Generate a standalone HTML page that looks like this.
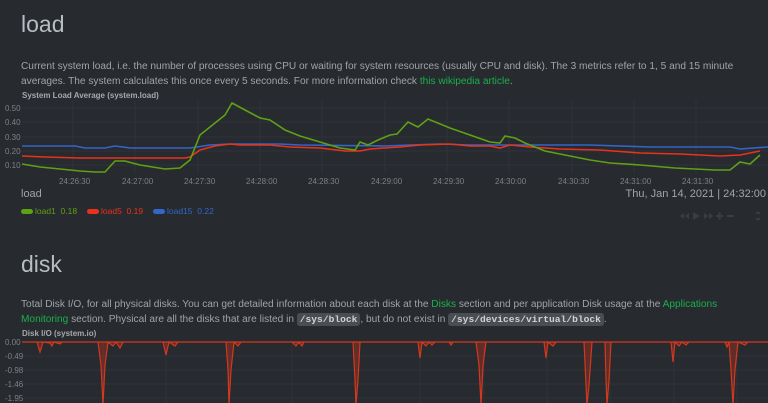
<!DOCTYPE html>
<html><head><meta charset="utf-8"><style>
html,body{margin:0;padding:0;}
body{width:768px;height:403px;overflow:hidden;background:#272a2f;font-family:"Liberation Sans",sans-serif;color:#a7abae;position:relative;}
.a{position:absolute;white-space:nowrap;}
h1{position:absolute;margin:0;font-weight:normal;font-size:23px;color:#b8bdc1;}
.p{font-size:10.15px;line-height:15px;color:#a0a4a8;}
.g{color:#1bb04a;}
code{font-family:"Liberation Mono",monospace;background:#4a4d52;color:#d0d3d6;border-radius:3px;padding:1px 3px;font-size:9.6px;font-weight:bold;}
.t{font-size:8px;font-weight:bold;color:#a5a9ad;}
.yl{font-size:8px;color:#7d8185;}
.xl{font-size:8px;color:#7d8185;}
.lg{font-size:8.5px;}
.sw{display:inline-block;width:12px;height:5px;border-radius:3px;vertical-align:middle;margin-right:2px;}
</style></head><body>
<h1 style="left:21px;top:11px">load</h1>
<div class="a p" style="left:21px;top:59px">Current system load, i.e. the number of processes using CPU or waiting for system resources (usually CPU and disk). The 3 metrics refer to 1, 5 and 15 minute<br>averages. The system calculates this once every 5 seconds. For more information check <span class="g">this wikipedia article</span>.</div>
<div class="a t" style="left:22px;top:91px">System Load Average (system.load)</div>
<div class="a yl" style="left:5px;top:104px">0.50</div>
<div class="a yl" style="left:5px;top:118px">0.40</div>
<div class="a yl" style="left:5px;top:133px">0.30</div>
<div class="a yl" style="left:5px;top:147px">0.20</div>
<div class="a yl" style="left:5px;top:161px">0.10</div>
<svg class="a" style="left:0;top:0" width="768" height="403">
<g stroke="#2f3338" stroke-width="1">
<line x1="73" y1="100" x2="73" y2="174"/><line x1="135" y1="100" x2="135" y2="174"/><line x1="198" y1="100" x2="198" y2="174"/><line x1="260" y1="100" x2="260" y2="174"/><line x1="322" y1="100" x2="322" y2="174"/><line x1="385" y1="100" x2="385" y2="174"/><line x1="447" y1="100" x2="447" y2="174"/><line x1="509" y1="100" x2="509" y2="174"/><line x1="572" y1="100" x2="572" y2="174"/><line x1="634" y1="100" x2="634" y2="174"/><line x1="696" y1="100" x2="696" y2="174"/>
<line x1="22" y1="108" x2="768" y2="108"/><line x1="22" y1="122" x2="768" y2="122"/><line x1="22" y1="137" x2="768" y2="137"/><line x1="22" y1="151" x2="768" y2="151"/><line x1="22" y1="165" x2="768" y2="165"/>
<line x1="103" y1="342" x2="103" y2="403"/><line x1="166" y1="342" x2="166" y2="403"/><line x1="229" y1="342" x2="229" y2="403"/><line x1="292" y1="342" x2="292" y2="403"/><line x1="356" y1="342" x2="356" y2="403"/><line x1="420" y1="342" x2="420" y2="403"/><line x1="484" y1="342" x2="484" y2="403"/><line x1="547" y1="342" x2="547" y2="403"/><line x1="610" y1="342" x2="610" y2="403"/><line x1="674" y1="342" x2="674" y2="403"/><line x1="737" y1="342" x2="737" y2="403"/>
<line x1="22" y1="356" x2="768" y2="356"/><line x1="22" y1="370" x2="768" y2="370"/><line x1="22" y1="384" x2="768" y2="384"/><line x1="22" y1="398" x2="768" y2="398"/>
</g>
<polyline fill="none" stroke="#3465c8" stroke-width="1.6" points="22,146 75,146 85,148 105,148 115,146 130,148 190,148 210,145 230,144 280,144 300,145 384,146 410,145 440,144 470,145 590,145 650,147 730,147 740,149 768,147"/>
<polyline fill="none" stroke="#e8331a" stroke-width="1.6" points="22,156 45,157 80,158 185,158 190,157 200,150 215,146 230,144 240,145 270,145 290,147 320,148 345,151 360,151 370,149 384,148 400,147 420,145 450,144 470,146 490,146 500,148 510,145 530,147 560,149 600,150 640,153 680,154 720,156 740,155 760,151"/>
<polyline fill="none" stroke="#5fa114" stroke-width="1.6" points="22,164 40,167 60,169 80,171 95,172 105,172 115,161 125,161 140,165 165,169 180,168 190,160 200,135 215,123 225,115 232,103 245,110 260,118 270,120 285,130 300,136 320,142 340,148 355,150 360,142 368,145 378,140 390,135 397,134 408,122 418,127 428,119 450,128 470,135 490,142 500,143 505,136 515,138 525,143 545,151 570,156 590,160 610,163 640,165 675,168 715,170 730,170 740,162 750,164 760,155"/>
<path fill="rgba(200,50,30,0.35)" stroke="#d4381e" stroke-width="1.2" d="M22,342 L37,342 L40,352 L43,342 L50,343 L52,346 L54,342 L60,344 L62,342 L98,342 L101,365 L103,405 L105,365 L108,342 L113,346 L116,342 L120,348 L123,342 L163,342 L166,355 L169,342 L175,346 L178,342 L226,342 L228,370 L229,405 L231,370 L234,342 L238,346 L241,342 L292,342 L296,346 L299,342 L302,346 L304,342 L353,342 L355,380 L356,405 L358,380 L360,342 L418,342 L420,358 L422,342 L426,346 L429,342 L432,345 L435,342 L449,342 L451,345 L453,342 L476,342 L479,365 L481,405 L483,365 L486,342 L544,342 L546,358 L548,342 L553,346 L556,342 L584,342 L586,385 L587,405 L589,385 L592,342 L605,342 L606,380 L607,405 L609,380 L611,342 L671,342 L673,362 L675,342 L679,346 L682,342 L686,345 L689,342 L725,342 L727,347 L729,342 L731,370 L733,405 L735,370 L738,342 L745,345 L748,342 L768,342 Z"/>
<g fill="#3a3e43"><path d="M684,213 l-4,3 4,3z M689,213 l-4,3 4,3z"/><path d="M693,212 l7,4 -7,4z"/><path d="M704,213 l4,3 -4,3z M709,213 l4,3 -4,3z"/><path d="M716,215h7v2h-7z M718.5,212.5h2v7h-2z"/><path d="M727,215h7v2h-7z"/><path d="M758,211 l3,3 h-6z M758,221 l3,-3 h-6z"/></g>
</svg>
<div class="a xl" style="left:59px;top:177px">24:26:30</div>
<div class="a xl" style="left:122px;top:177px">24:27:00</div>
<div class="a xl" style="left:184px;top:177px">24:27:30</div>
<div class="a xl" style="left:246px;top:177px">24:28:00</div>
<div class="a xl" style="left:308px;top:177px">24:28:30</div>
<div class="a xl" style="left:371px;top:177px">24:29:00</div>
<div class="a xl" style="left:433px;top:177px">24:29:30</div>
<div class="a xl" style="left:495px;top:177px">24:30:00</div>
<div class="a xl" style="left:558px;top:177px">24:30:30</div>
<div class="a xl" style="left:620px;top:177px">24:31:00</div>
<div class="a xl" style="left:682px;top:177px">24:31:30</div>
<div class="a" style="left:21px;top:188px;font-size:11px;color:#a0a4a8">load</div>
<div class="a" style="right:2px;top:188px;font-size:11px;color:#a0a4a8">Thu, Jan 14, 2021 | 24:32:00</div>
<div class="a lg" style="left:21px;top:206px"><span class="sw" style="background:#5fa114"></span><span style="color:#5fa114">load1&nbsp; 0.18</span></div>
<div class="a lg" style="left:87px;top:206px"><span class="sw" style="background:#e8331a"></span><span style="color:#e8331a">load5&nbsp; 0.19</span></div>
<div class="a lg" style="left:153px;top:206px"><span class="sw" style="background:#3465c8"></span><span style="color:#3465c8">load15&nbsp; 0.22</span></div>
<h1 style="left:21px;top:251px">disk</h1>
<div class="a p" style="left:21px;top:297px">Total Disk I/O, for all physical disks. You can get detailed information about each disk at the <span class="g">Disks</span> section and per application Disk usage at the <span class="g">Applications</span><br><span class="g">Monitoring</span> section. Physical are all the disks that are listed in <code>/sys/block</code>, but do not exist in <code>/sys/devices/virtual/block</code>.</div>
<div class="a t" style="left:22px;top:329px">Disk I/O (system.io)</div>
<div class="a yl" style="left:5px;top:338px">0.00</div>
<div class="a yl" style="left:5px;top:352px">-0.49</div>
<div class="a yl" style="left:5px;top:366px">-0.98</div>
<div class="a yl" style="left:5px;top:380px">-1.46</div>
<div class="a yl" style="left:5px;top:394px">-1.95</div>
</body></html>
